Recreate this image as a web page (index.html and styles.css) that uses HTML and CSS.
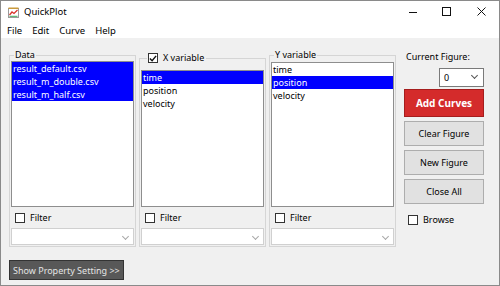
FILE: index.html
```html
<!DOCTYPE html>
<html lang="en">
<head>
  <meta charset="UTF-8">
  <title>QuickPlot</title>
  <link rel="stylesheet" href="styles.css">
</head>
<body>

  <div class="window">
    <div class="titlebar">
      <svg class="app-icon" width="11" height="11" viewBox="0 0 11 11">
        <rect x="0.5" y="1.5" width="10" height="9" fill="#fff" stroke="#9a9a9a"/>
        <polyline points="1.5,8 4,5 6,6.5 9.5,3" fill="none" stroke="#d9342b" stroke-width="1.3"/>
        <polyline points="1.5,9.3 9.5,9.3" fill="none" stroke="#3aa655" stroke-width="1"/>
        <rect x="0.5" y="0.5" width="10" height="1.5" fill="#c99a3b"/>
      </svg>
      <span class="title">QuickPlot</span>
      <div class="controls">
        <span class="ctl"><svg width="10" height="10" viewBox="0 0 10 10"><line x1="0" y1="5.5" x2="8" y2="5.5" stroke="#111"/></svg></span>
        <span class="ctl"><svg width="10" height="10" viewBox="0 0 10 10"><rect x="0.5" y="0.5" width="8" height="8" fill="none" stroke="#111"/></svg></span>
        <span class="ctl"><svg width="10" height="10" viewBox="0 0 10 10"><path d="M0.5 0.5 L8.5 8.5 M8.5 0.5 L0.5 8.5" stroke="#111"/></svg></span>
      </div>
    </div>

    <div class="menubar">
      <span>File</span>
      <span>Edit</span>
      <span>Curve</span>
      <span>Help</span>
    </div>

    <div class="client">
      <div class="main">
        <!-- data files -->
        <fieldset class="group">
          <legend>Data</legend>
          <ul class="listbox">
            <li class="sel">result_default.csv</li>
            <li class="sel">result_m_double.csv</li>
            <li class="sel">result_m_half.csv</li>
          </ul>
          <label class="check filter"><span class="box"></span>Filter</label>
          <div class="combo"><span class="chev"></span></div>
        </fieldset>

        <!-- x variable -->
        <fieldset class="group group-x">
          <legend class="check-legend"><span class="box checked">
            <svg width="9" height="9" viewBox="0 0 9 9"><polyline points="1,4.5 3.5,7 8,1.5" fill="none" stroke="#111" stroke-width="1.6"/></svg>
          </span>X variable</legend>
          <ul class="listbox">
            <li class="sel">time</li>
            <li>position</li>
            <li>velocity</li>
          </ul>
          <label class="check filter"><span class="box"></span>Filter</label>
          <div class="combo"><span class="chev"></span></div>
        </fieldset>

        <!-- y variable -->
        <fieldset class="group group-y">
          <legend>Y variable</legend>
          <ul class="listbox">
            <li>time</li>
            <li class="sel">position</li>
            <li>velocity</li>
          </ul>
          <label class="check filter"><span class="box"></span>Filter</label>
          <div class="combo"><span class="chev"></span></div>
        </fieldset>

        <div class="side">
          <div class="side-label">Current Figure:</div>
          <div class="combo figure">0<span class="chev"></span></div>
          <button class="btn btn-add">Add Curves</button>
          <button class="btn">Clear Figure</button>
          <button class="btn">New Figure</button>
          <button class="btn">Close All</button>
          <label class="check browse"><span class="box"></span>Browse</label>
        </div>
      </div>

      <button class="toggle">Show Property Setting &gt;&gt;</button>
    </div>
  </div>

</body>
</html>
```

FILE: styles.css
```css
:root {
  --face: #f0f0f0;
  --frame: #d5d5d5;
  --list-border: #8e8e8e;
  --select: #0000ff;
  --btn-bg: #e1e1e1;
  --btn-border: #adadad;
}

* {
  box-sizing: border-box;
}

body {
  margin: 0;
  font-family: 'Noto Sans', sans-serif;
  font-size: 9px;
  color: #000;
}

.window {
  width: 500px;
  height: 286px;
  border: 1px solid #8a8a8a;
  background: var(--face);
  display: flex;
  flex-direction: column;
  overflow: hidden;
}

/* title bar */
.titlebar {
  height: 22px;
  background: #fff;
  display: flex;
  align-items: center;
  padding-left: 7px;
}

.app-icon {
  margin-top: 1px;
}

.title {
  margin-left: 5px;
  margin-top: -1px;
  font-size: 9.5px;
}

.controls {
  margin-left: auto;
  display: flex;
}

.ctl {
  width: 35px;
  height: 22px;
  display: flex;
  align-items: center;
  justify-content: center;
}

.ctl:first-child {
  margin-right: -2px;
}

/* menu */
.menubar {
  height: 15px;
  background: #fff;
  display: flex;
  align-items: center;
  padding-left: 6px;
  font-size: 9.5px;
}

.menubar span {
  margin-right: 10px;
}

/* client area */
.client {
  flex: 1;
  padding: 11px 0 0 8px;
}

.main {
  height: 198px;
  display: flex;
}

.group {
  width: 127px;
  margin: 0 3px 0 0;
  padding: 0 1px 1px;
  border: 1px solid var(--frame);
  display: flex;
  flex-direction: column;
  min-width: 0;
}

.group legend {
  padding: 0 1px;
  margin-left: 3px;
  line-height: 12px;
}

.check-legend {
  display: flex;
  align-items: center;
  height: 18px;
  margin-left: 6px !important;
  padding-right: 2px !important;
}

.group-x .listbox {
  margin-top: 3px;
}

.group-y .listbox {
  margin-top: 1px;
}

.listbox {
  flex: 1;
  list-style: none;
  margin: 0;
  padding: 0;
  background: #fff;
  border: 1px solid var(--list-border);
}

.listbox li {
  height: 13px;
  line-height: 13px;
  padding-left: 1px;
  white-space: nowrap;
}

.listbox li.sel {
  background: var(--select);
  color: #fff;
}

/* checkboxes */
.check {
  display: flex;
  align-items: center;
}

.box {
  width: 10px;
  height: 10px;
  border: 1px solid #333;
  background: #fff;
  margin-right: 5px;
  display: flex;
  align-items: center;
  justify-content: center;
}

.filter {
  height: 21px;
  padding-left: 4px;
}

/* combo boxes */
.combo {
  height: 17px;
  background: #fff;
  border: 1px solid #d0d0d0;
  position: relative;
}

.chev {
  position: absolute;
  right: 5px;
  top: 5px;
  width: 5px;
  height: 5px;
  border-right: 1px solid #a8a8a8;
  border-bottom: 1px solid #a8a8a8;
  transform: rotate(45deg);
}

/* right column */
.side {
  width: 80px;
  margin-left: 5px;
  display: flex;
  flex-direction: column;
}

.side-label {
  line-height: 16px;
  padding-left: 2px;
  white-space: nowrap;
}

.combo.figure {
  width: 45px;
  height: 19px;
  margin: 3px 0 0 auto;
  border-color: #7a7a7a;
  padding-left: 4px;
  line-height: 17px;
}

.combo.figure .chev {
  top: 4px;
  right: 6px;
  border-color: #555;
}

.btn {
  height: 25px;
  margin-top: 4px;
  background: var(--btn-bg);
  border: 1px solid var(--btn-border);
  font-family: inherit;
  font-size: 9px;
  padding: 0;
}

.btn-add {
  height: 28px;
  margin-top: 2px;
  background: #d42b2b;
  border-color: #a51d1d;
  color: #fff;
  font-weight: bold;
  font-size: 10px;
}

.browse {
  margin-top: 9px;
  padding-left: 4px;
}

/* bottom toggle */
.toggle {
  margin-top: 13px;
  width: 115px;
  height: 20px;
  background: #585858;
  border: 1px solid #333;
  color: #e4e4e4;
  font-family: inherit;
  font-size: 9px;
  padding: 0 0 0 3px;
  text-align: left;
  white-space: nowrap;
}
```
